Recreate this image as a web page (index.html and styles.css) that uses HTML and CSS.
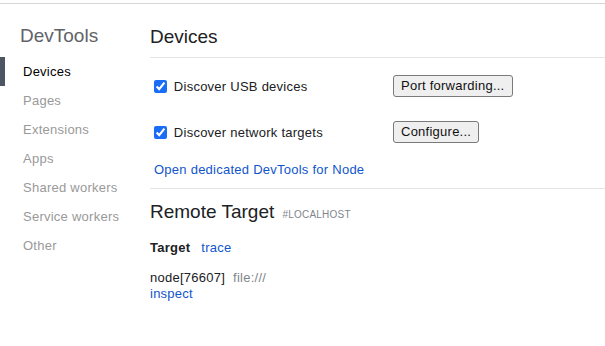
FILE: index.html
```html
<!DOCTYPE html>
<html lang="en">
<head>
<meta charset="utf-8">
<title>Inspect with Chrome Developer Tools</title>
<link rel="stylesheet" href="styles.css">
</head>
<body>
<div class="frame">
  <nav class="sidebar">
    <h1 class="sidebar-title">DevTools</h1>
    <ul class="nav-list">
      <li class="nav-item active">Devices</li>
      <li class="nav-item">Pages</li>
      <li class="nav-item">Extensions</li>
      <li class="nav-item">Apps</li>
      <li class="nav-item">Shared workers</li>
      <li class="nav-item">Service workers</li>
      <li class="nav-item">Other</li>
    </ul>
  </nav>
  <main class="content">
    <section class="devices">
      <h2 class="page-title">Devices</h2>
      <div class="options">
        <div class="option-row">
          <label class="option-label"><input type="checkbox" class="check" checked> Discover USB devices</label>
          <button class="btn">Port forwarding...</button>
        </div>
        <div class="option-row">
          <label class="option-label"><input type="checkbox" class="check" checked> Discover network targets</label>
          <button class="btn">Configure...</button>
        </div>
        <a class="link node-link" href="#">Open dedicated DevTools for Node</a>
      </div>
    </section>
    <section class="remote">
      <h2 class="remote-title">Remote Target <span class="remote-tag">#LOCALHOST</span></h2>
      <div class="target-head"><span class="target-label">Target</span><a class="link" href="#">trace</a></div>
      <div class="target-row">
        <div class="target-name">node[76607]<span class="target-url">file:///</span></div>
        <a class="link" href="#">inspect</a>
      </div>
    </section>
  </main>
</div>
</body>
</html>
```

FILE: styles.css
```css
* { box-sizing: border-box; }

html, body {
  margin: 0;
  padding: 0;
  background: #ffffff;
}

body {
  font-family: "Liberation Sans", Arial, Helvetica, sans-serif;
  font-size: 13px;
  letter-spacing: 0.25px;
  color: #202124;
  padding-top: 3px;
}

.frame {
  border-top: 1px solid #d6d6d6;
  display: flex;
  min-height: 342px;
}

.sidebar {
  width: 150px;
  flex: none;
  padding-top: 20px;
}

.sidebar-title {
  margin: 0 0 9px 20px;
  font-size: 19px;
  line-height: 24px;
  letter-spacing: 0;
  font-weight: normal;
  color: #5f6368;
}

.nav-list {
  list-style: none;
  margin: 0;
  padding: 0;
}

.nav-item {
  line-height: 29px;
  height: 29px;
  padding-left: 18px;
  color: #999999;
  border-left: 5px solid transparent;
}

.nav-item.active {
  color: #000000;
  border-left-color: #4d5562;
}

.content {
  flex: 1;
  min-width: 0;
}

.devices {
  border-bottom: 1px solid #e5e5e5;
  padding-bottom: 10px;
}

.page-title {
  margin: 0;
  padding-top: 21px;
  padding-bottom: 8px;
  font-size: 19px;
  line-height: 24px;
  letter-spacing: 0;
  font-weight: normal;
  color: #202124;
  border-bottom: 1px solid #e5e5e5;
}

.options {
  padding-top: 17px;
  display: flex;
  flex-direction: column;
  align-items: flex-start;
}

.option-row {
  display: flex;
  align-items: center;
  height: 22px;
  margin-bottom: 24px;
}

.option-row:nth-child(2) {
  margin-bottom: 19px;
}

.option-label {
  width: 243px;
  display: flex;
  align-items: center;
  white-space: pre;
  color: #202124;
}

.check {
  width: 13px;
  height: 13px;
  margin: 0 3px 0 4px;
  accent-color: #1a6ef5;
}

.btn {
  font-family: inherit;
  font-size: 13px;
  letter-spacing: 0.25px;
  line-height: 16px;
  height: 22px;
  padding: 2px 7px;
  color: #111111;
  background: #efefef;
  border: 1px solid #7a7a7a;
  border-radius: 3px;
}

.link {
  color: #1155cc;
  text-decoration: none;
  line-height: 16px;
}

.node-link {
  margin-left: 4px;
}

.remote {
  padding-top: 11px;
}

.remote-title {
  margin: 0;
  font-size: 19px;
  line-height: 24px;
  letter-spacing: 0;
  font-weight: normal;
  color: #202124;
}

.remote-tag {
  font-size: 10px;
  color: #80868b;
  margin-left: 3px;
  letter-spacing: 0.2px;
}

.target-head {
  margin-top: 13px;
  line-height: 16px;
  display: flex;
  gap: 11px;
}

.target-label {
  font-weight: bold;
}

.target-row {
  margin-top: 14px;
  line-height: 16px;
  display: flex;
  flex-direction: column;
  align-items: flex-start;
}

.target-url {
  color: #80868b;
  margin-left: 8px;
}
```
